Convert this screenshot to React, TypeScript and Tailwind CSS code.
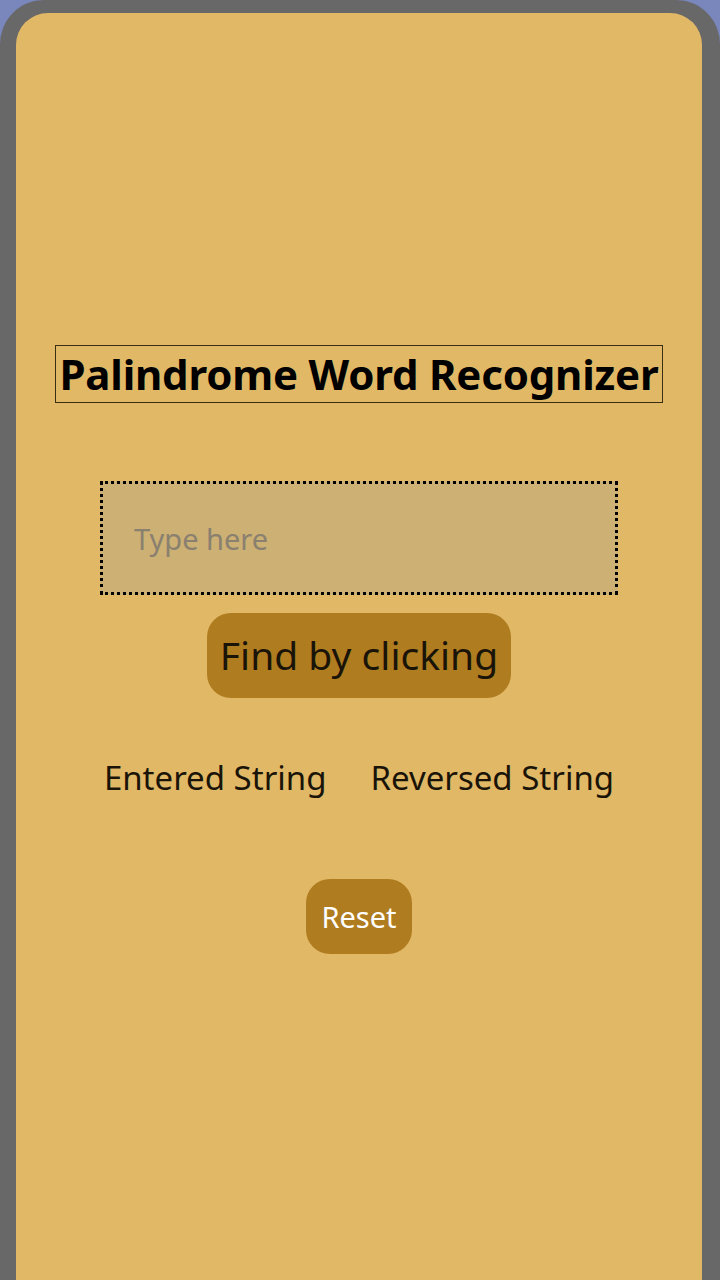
export default function App() {
  return (
    <div className="h-[1280px] w-[720px] overflow-hidden bg-[#7a87bd]">
      <div className="h-[1340px] rounded-[44px] bg-[#686868] pl-[16px] pr-[18px] pt-[13px]">
        <div
          className="flex h-[1300px] flex-col items-center rounded-[32px] bg-[#e1b866] pt-[332px]"
          style={{ fontFamily: '"Noto Sans", "Open Sans", sans-serif' }}
        >
          <h1 className="border-[1.5px] border-[#3a2e14] px-[3px] text-[42px] font-bold leading-[56px] tracking-[-0.2px] text-black">
            Palindrome Word Recognizer
          </h1>
          <input
            placeholder="Type here"
            className="mt-[78px] h-[114px] w-[518px] border-[3px] border-dotted border-black bg-[#cdb073] px-[31px] text-[29px] text-black placeholder:text-[#8a8070] focus:outline-none"
          />
          <button className="mt-[18px] h-[85px] rounded-[24px] bg-[#b07c20] px-[13px] text-[39px] text-[#1a1408]">
            Find by clicking
          </button>
          <div className="mt-[58px] flex gap-[44px] text-[33px] leading-[44px] text-[#1a1408]">
            <span>Entered String</span>
            <span>Reversed String</span>
          </div>
          <button className="mt-[79px] h-[75px] rounded-[24px] bg-[#b07c20] px-[15px] text-[29px] text-white">
            Reset
          </button>
        </div>
      </div>
    </div>
  );
}
